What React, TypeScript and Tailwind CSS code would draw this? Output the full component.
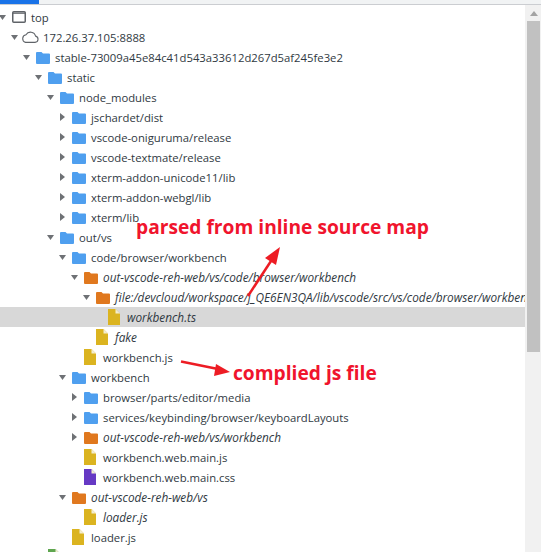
import React from 'react';

type Kind = 'frame' | 'cloud' | 'folder' | 'source' | 'js' | 'css' | 'map';

interface Row {
    depth: number;
    kind: Kind;
    label: string;
    arrow?: 'open' | 'closed';
    italic?: boolean;
    selected?: boolean;
}

const rows: Row[] = [
    { depth: 0, kind: 'frame', label: 'top', arrow: 'open' },
    { depth: 1, kind: 'cloud', label: '172.26.37.105:8888', arrow: 'open' },
    { depth: 2, kind: 'folder', label: 'stable-73009a45e84c41d543a33612d267d5af245fe3e2', arrow: 'open' },
    { depth: 3, kind: 'folder', label: 'static', arrow: 'open' },
    { depth: 4, kind: 'folder', label: 'node_modules', arrow: 'open' },
    { depth: 5, kind: 'folder', label: 'jschardet/dist', arrow: 'closed' },
    { depth: 5, kind: 'folder', label: 'vscode-oniguruma/release', arrow: 'closed' },
    { depth: 5, kind: 'folder', label: 'vscode-textmate/release', arrow: 'closed' },
    { depth: 5, kind: 'folder', label: 'xterm-addon-unicode11/lib', arrow: 'closed' },
    { depth: 5, kind: 'folder', label: 'xterm-addon-webgl/lib', arrow: 'closed' },
    { depth: 5, kind: 'folder', label: 'xterm/lib', arrow: 'closed' },
    { depth: 4, kind: 'folder', label: 'out/vs', arrow: 'open' },
    { depth: 5, kind: 'folder', label: 'code/browser/workbench', arrow: 'open' },
    { depth: 6, kind: 'source', label: 'out-vscode-reh-web/vs/code/browser/workbench', arrow: 'open', italic: true },
    { depth: 7, kind: 'source', label: 'file:/devcloud/workspace/j_QE6EN3QA/lib/vscode/src/vs/code/browser/workbench', arrow: 'open', italic: true },
    { depth: 8, kind: 'js', label: 'workbench.ts', italic: true, selected: true },
    { depth: 7, kind: 'js', label: 'fake', italic: true },
    { depth: 6, kind: 'js', label: 'workbench.js' },
    { depth: 5, kind: 'folder', label: 'workbench', arrow: 'open' },
    { depth: 6, kind: 'folder', label: 'browser/parts/editor/media', arrow: 'closed' },
    { depth: 6, kind: 'folder', label: 'services/keybinding/browser/keyboardLayouts', arrow: 'closed' },
    { depth: 6, kind: 'source', label: 'out-vscode-reh-web/vs/workbench', arrow: 'closed', italic: true },
    { depth: 6, kind: 'js', label: 'workbench.web.main.js' },
    { depth: 6, kind: 'css', label: 'workbench.web.main.css' },
    { depth: 5, kind: 'source', label: 'out-vscode-reh-web/vs', arrow: 'open', italic: true },
    { depth: 6, kind: 'js', label: 'loader.js', italic: true },
    { depth: 5, kind: 'js', label: 'loader.js' },
    { depth: 3, kind: 'map', label: '' },
];

const indents = ['pl-0', 'pl-3', 'pl-6', 'pl-9', 'pl-12', 'pl-[60px]', 'pl-[72px]', 'pl-[84px]', 'pl-24'];

const Arrow = ({ dir }: { dir?: 'open' | 'closed' }) => (
    <span className="w-3 h-5 shrink-0 flex items-center justify-start">
        {dir === 'open' && (
            <svg className="-ml-px" width="7" height="5" viewBox="0 0 7 5"><path d="M0 0h7L3.500 5z" fill="#6e7175" /></svg>
        )}
        {dir === 'closed' && (
            <svg width="5" height="8" viewBox="0 0 5 8"><path d="M0 0l5 4-5 4z" fill="#6e7175" /></svg>
        )}
    </span>
);

const Icon = ({ kind }: { kind: Kind }) => {
    if (kind === 'frame') {
        return (
            <svg className="shrink-0 mr-[5px]" width="14" height="12" viewBox="0 0 14 12">
                <rect x="0.75" y="0.75" width="12.5" height="10.5" rx="1" fill="none" stroke="#5f6368" strokeWidth="1.5" />
                <path d="M1 2.200h12" stroke="#5f6368" strokeWidth="1.2" />
            </svg>
        );
    }
    if (kind === 'cloud') {
        return (
            <svg className="shrink-0 mr-[4px] -ml-[3px]" width="18" height="12" viewBox="0 0 18 12">
                <path d="M4.500 11.400h9.500a3.200 3.200 0 0 0 .6-6.300A5.200 5.200 0 0 0 5 3.800a3.900 3.900 0 0 0-.5 7.600z" fill="none" stroke="#5f6368" strokeWidth="1.1" />
            </svg>
        );
    }
    if (kind === 'folder' || kind === 'source') {
        return (
            <svg className="shrink-0 mr-[5px] mt-[2px]" width="14" height="12" viewBox="0 0 14 12">
                <path d="M0 1a1 1 0 0 1 1-1h4.500l1.500 1.600h6a1 1 0 0 1 1 1V11a1 1 0 0 1-1 1H1a1 1 0 0 1-1-1z" fill={kind === 'folder' ? '#4f9fef' : '#e0781e'} />
            </svg>
        );
    }
    const fill = kind === 'css' ? '#6639c4' : kind === 'map' ? '#5fa64f' : '#dbb420';
    return (
        <svg className="shrink-0 mr-[7px]" width="12" height="16" viewBox="0 0 12 16">
            <path d="M0 0h7.500L12 4.500V16H0z" fill={fill} />
            <path d="M7.500 0L12 4.500H7.500z" fill="#f3edd0" />
        </svg>
    );
};

export default function App() {
    return (
        <div className="w-[541px] h-[552px] overflow-hidden bg-white flex flex-col relative font-['Open_Sans','Noto_Sans',sans-serif]">
            {/* loading bar */}
            <div className="h-[5px] shrink-0 bg-[#f1f3f4] border-b border-[#cbcdd1]">
                <div className="w-[39px] h-1 bg-[#1a73e8]" />
            </div>
            <div className="flex-1 flex min-h-0">
                <div className="flex-1 min-w-0 overflow-hidden pt-[2px]">
                    {rows.map((row, i) => (
                        <div
                            key={i}
                            className={`h-5 flex items-center whitespace-nowrap text-[#303942] ${indents[row.depth]} ${row.selected ? 'bg-[#d8d8d8]' : ''}`}
                        >
                            <Arrow dir={row.arrow} />
                            <Icon kind={row.kind} />
                            <span className={`pt-[2px] ${row.italic ? 'italic text-[11.8px]' : 'text-[11.3px]'}`}>{row.label}</span>
                        </div>
                    ))}
                </div>
                {/* scrollbar */}
                <div className="w-4 shrink-0 bg-[#f1f1f1] flex flex-col items-center pl-px">
                    <svg className="mt-[6px] mb-[5px] shrink-0" width="8" height="5" viewBox="0 0 8 5"><path d="M4 0l4 5H0z" fill="#a3a3a3" /></svg>
                    <div className="w-[13px] h-[331px] bg-[#c1c1c1]" />
                </div>
            </div>
            {/* annotations */}
            <div className="absolute left-[136px] top-[215px] text-[19.2px] leading-6 font-bold text-[#f0142d] whitespace-nowrap">parsed from inline source map</div>
            <div className="absolute left-[233px] top-[361px] text-[19.2px] leading-6 font-bold text-[#f0142d] whitespace-nowrap">complied js file</div>
            <svg className="absolute left-0 top-0 pointer-events-none" width="541" height="552" viewBox="0 0 541 552">
                <path d="M248 296L273 258" stroke="#ed1c24" strokeWidth="2.500" />
                <path d="M280 247L276 265L265 258z" fill="#ed1c24" />
                <path d="M181 361.500L218 369" stroke="#ed1c24" strokeWidth="2.500" />
                <path d="M230 372L214 376L216 364z" fill="#ed1c24" />
            </svg>
        </div>
    );
}
